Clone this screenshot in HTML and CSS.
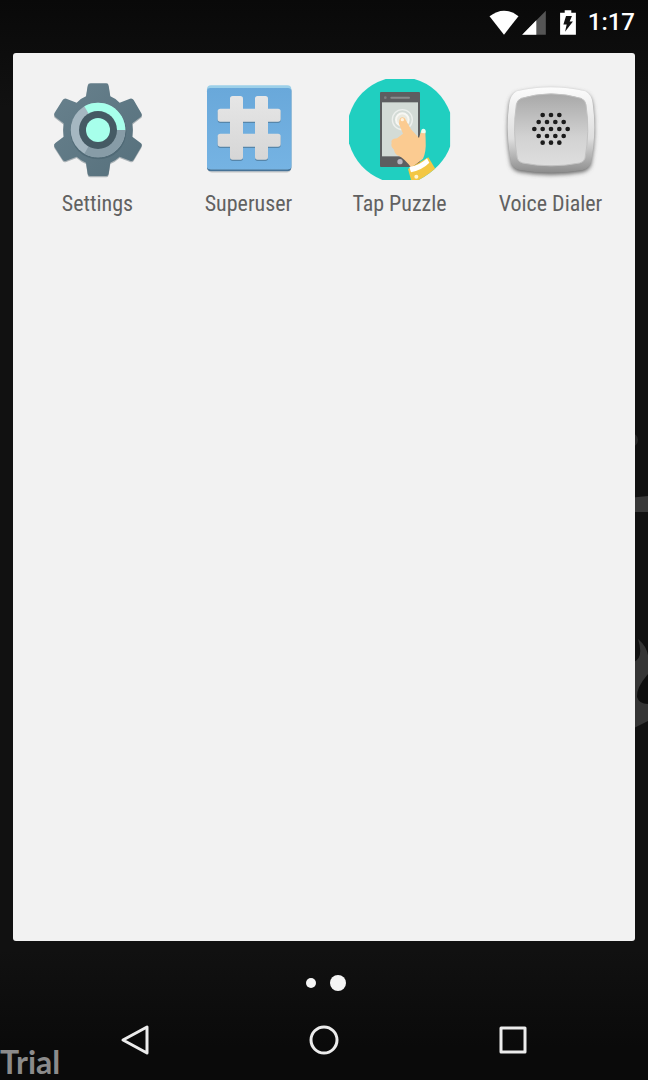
FILE: index.html
```html
<!DOCTYPE html>
<html lang="en">
<head>
  <meta charset="UTF-8" />
  <meta name="viewport" content="width=device-width, initial-scale=1.0"/>
  <title>Apps</title>
  <link rel="stylesheet" href="styles.css">
</head>
<body>
  <!-- wallpaper shapes peeking out at the right edge -->
  <svg class="wallpaper" viewBox="0 0 40 320" aria-hidden="true">
    <circle cx="23" cy="20" r="7" fill="#292929"/>
    <path d="M20 78 L40 76 V92 H20Z" fill="#383838"/>
    <path d="M30 219 Q42 229 40 243 V301 L26 308 V242 Q36 237 30 219Z" fill="#353535"/>
    <path d="M40 254 Q28 268 29 277 Q31 284 40 284Z" fill="#0e0e0e"/>
  </svg>

  <header class="status-bar">
    <svg class="wifi" viewBox="36 26 88 76" role="img" aria-label="Wi-Fi">
      <path d="M36 45 Q80 11 124 45 L80 101Z" fill="#fff"/>
    </svg>
    <svg class="signal" viewBox="133 26 72 76" role="img" aria-label="Signal">
      <path d="M205 28 V101 H133Z" fill="#555"/>
      <path d="M176 57 V101 H133Z" fill="#fff"/>
    </svg>
    <svg class="battery" viewBox="247 26 48 76" role="img" aria-label="Battery charging">
      <path d="M261 27 H281 V34 H295 V101 H247 V34 H261Z" fill="#fff"/>
      <path d="M265 44 H283 L276 61 H286 L262 92 L267 70 H257Z" fill="#111"/>
    </svg>
    <time class="clock">1:17</time>
  </header>

  <main class="drawer">
    <button class="app">
      <svg class="app-icon" viewBox="18 24 312 312" aria-hidden="true">
        <defs>
          <linearGradient id="gearFill" x1="0" y1="0" x2="1" y2="1">
            <stop offset="0" stop-color="#68818d"/>
            <stop offset="1" stop-color="#56707c"/>
          </linearGradient>
          <path id="gear" d="M152 40 H199 Q205 40 206 47 L211 79 Q226 85 239 98 L270 86 Q277 84 281 90 L304 130 Q308 137 302 141 L277 160 Q280 180 277 200 L302 219 Q308 223 304 230 L281 269 Q277 275 270 272 L239 260 Q226 272 211 278 L206 311 Q205 318 199 318 H150 Q144 318 143 311 L138 278 Q123 272 110 260 L79 272 Q72 275 68 269 L43 230 Q40 223 46 219 L71 200 Q68 180 71 160 L46 141 Q40 137 43 130 L68 90 Q72 84 79 86 L110 98 Q123 85 138 79 L143 47 Q144 40 152 40Z"/>
        </defs>
        <use href="#gear" y="4" fill="#aab2b6"/>
        <use href="#gear" fill="url(#gearFill)"/>
        <circle cx="175" cy="184" r="84" fill="#506a76"/>
        <circle cx="174" cy="180" r="82" fill="#a5b7c1"/>
        <path d="M174 180 L133 109 A82 82 0 0 1 256 180Z" fill="#a7ffeb"/>
        <path d="M174 180 H256 A82 82 0 0 1 133 251Z" fill="#879ca7"/>
        <circle cx="174" cy="180" r="57" fill="#455a64"/>
        <circle cx="174" cy="180" r="36" fill="#a7ffeb"/>
      </svg>
      <span class="app-name">Settings</span>
    </button>

    <button class="app">
      <svg class="app-icon" viewBox="21 24 312 312" aria-hidden="true">
        <defs>
          <linearGradient id="tile" x1="0" y1="0" x2="0" y2="1">
            <stop offset="0" stop-color="#69a8da"/>
            <stop offset="1" stop-color="#75b3e3"/>
          </linearGradient>
          <linearGradient id="hashFill" x1="0" y1="0" x2="0" y2="1">
            <stop offset="0" stop-color="#e6e6e6"/>
            <stop offset="1" stop-color="#d6d6d6"/>
          </linearGradient>
          <path id="hash" fill-rule="evenodd" d="M128 78 H151 Q159 78 159 86 V116 H195 V86 Q195 78 203 78 H226 Q234 78 234 86 V116 H264 Q272 116 272 124 V147 Q272 155 264 155 H234 V191 H264 Q272 191 272 199 V222 Q272 230 264 230 H234 V261 Q234 269 226 269 H203 Q195 269 195 261 V230 H159 V261 Q159 269 151 269 H128 Q120 269 120 261 V230 H91 Q83 230 83 222 V199 Q83 191 91 191 H120 V155 H91 Q83 155 83 147 V124 Q83 116 91 116 H120 V86 Q120 78 128 78Z M159 155 V191 H195 V155Z"/>
        </defs>
        <rect x="52" y="52" width="252" height="256" rx="14" fill="#d4d4d4"/>
        <rect x="51" y="50" width="253" height="254" rx="12" fill="#477397"/>
        <rect x="51" y="46" width="253" height="252" rx="12" fill="#9cd0e9"/>
        <rect x="51" y="54" width="253" height="244" rx="10" fill="url(#tile)"/>
        <use href="#hash" y="4" fill="#5686aa"/>
        <use href="#hash" fill="url(#hashFill)"/>
      </svg>
      <span class="app-name">Superuser</span>
    </button>

    <button class="app">
      <svg class="app-icon" viewBox="24 24 312 312" aria-hidden="true">
        <defs>
          <clipPath id="round">
            <path d="M137 27 H223 Q300 49 331 129 V228 Q310 290 236 330 H127 Q52 300 27 220 V137 Q53 54 137 27Z"/>
          </clipPath>
        </defs>
        <g clip-path="url(#round)">
          <rect x="20" y="20" width="320" height="320" fill="#20cfc0"/>
          <rect x="120" y="66" width="120" height="225" rx="3" fill="#5d5e60"/>
          <rect x="126" y="97" width="108" height="162" fill="#d3dbd6"/>
          <rect x="151" y="80" width="59" height="6" rx="3" fill="#898b8c"/>
          <circle cx="136" cy="83" r="4" fill="#7d7f80"/>
          <circle cx="180" cy="275" r="8" fill="#b9b6c0"/>
          <circle cx="187" cy="149" r="30" fill="none" stroke="#edf0ed" stroke-width="4"/>
          <circle cx="187" cy="149" r="19" fill="#e9e9df" stroke="#f7f7f3" stroke-width="6"/>
          <path d="M178 151 Q181 138 194 144 L213 178 L237 204 L243 184 Q248 173 256 183 L257 211 Q259 246 249 266 L214 293 Q193 265 176 257 Q164 253 162 239 Q151 230 155 219 Q150 207 171 205 L189 191 L177 162Z" fill="#fbcb91"/>
          <circle cx="187" cy="149" r="5" fill="#fff1dc"/>
          <path d="M244 189 Q242 176 251 176 Q260 178 256 190Z" fill="#e9fff3"/>
          <path d="M204 297 L265 262 L288 300 L235 340 H216Z" fill="#f3c744"/>
          <path d="M208 291 Q242 285 261 265 L268 278 Q249 298 213 307Z" fill="#fff"/>
          <circle cx="229" cy="320" r="6" fill="#fff5cf"/>
        </g>
      </svg>
      <span class="app-name">Tap Puzzle</span>
    </button>

    <button class="app">
      <svg class="app-icon" viewBox="27 24 312 312" aria-hidden="true">
        <defs>
          <linearGradient id="rim" x1="0" y1="0" x2="0" y2="1">
            <stop offset="0" stop-color="#fcfcfc"/>
            <stop offset="0.6" stop-color="#dedede"/>
            <stop offset="1" stop-color="#8c8c8c"/>
          </linearGradient>
          <linearGradient id="face" x1="0" y1="0" x2="0" y2="1">
            <stop offset="0" stop-color="#a8a8a8"/>
            <stop offset="0.6" stop-color="#d2d2d2"/>
            <stop offset="1" stop-color="#dedede"/>
          </linearGradient>
          <filter id="shade" x="-20%" y="-20%" width="140%" height="140%">
            <feGaussianBlur stdDeviation="7"/>
          </filter>
          <path id="shell" d="M80 64 Q183 39 286 64 Q305 74 308 99 Q320 184 303 278 Q297 295 278 300 Q183 317 89 300 Q68 295 63 278 Q46 184 58 99 Q62 74 80 64Z"/>
        </defs>
        <use href="#shell" y="6" fill="#666" filter="url(#shade)"/>
        <use href="#shell" fill="url(#rim)"/>
        <path d="M94 85 Q183 58 273 85 Q286 90 288 104 Q300 184 285 265 Q282 276 269 279 Q183 296 98 279 Q85 276 82 265 Q67 184 79 104 Q81 90 94 85Z" fill="url(#face)" stroke="#c2c2c2" stroke-width="3"/>
        <g fill="#1b1b1b">
          <circle cx="158" cy="135" r="7"/><circle cx="183" cy="135" r="7"/><circle cx="208" cy="135" r="7"/>
          <circle cx="146" cy="156" r="7"/><circle cx="171" cy="156" r="7"/><circle cx="196" cy="156" r="7"/><circle cx="221" cy="156" r="7"/>
          <circle cx="133" cy="177" r="7"/><circle cx="158" cy="177" r="7"/><circle cx="183" cy="177" r="7"/><circle cx="208" cy="177" r="7"/><circle cx="233" cy="177" r="7"/>
          <circle cx="146" cy="198" r="7"/><circle cx="171" cy="198" r="7"/><circle cx="196" cy="198" r="7"/><circle cx="221" cy="198" r="7"/>
          <circle cx="158" cy="218" r="7"/><circle cx="183" cy="218" r="7"/><circle cx="208" cy="218" r="7"/>
        </g>
      </svg>
      <span class="app-name">Voice Dialer</span>
    </button>
  </main>

  <div class="pages">
    <button class="page" aria-label="Page 1"></button>
    <button class="page current" aria-label="Page 2"></button>
  </div>

  <nav class="nav-bar">
    <button class="nav-btn" aria-label="Back">
      <svg viewBox="0 0 32 32"><path d="M28 3 V29 L4 16Z"/></svg>
    </button>
    <button class="nav-btn" aria-label="Home">
      <svg viewBox="0 0 32 32"><circle cx="16" cy="16" r="13"/></svg>
    </button>
    <button class="nav-btn" aria-label="Recent apps">
      <svg viewBox="0 0 32 32"><rect x="4" y="4" width="24" height="24"/></svg>
    </button>
  </nav>

  <div class="watermark">Trial</div>
</body>
</html>
```

FILE: styles.css
```css
* {
  box-sizing: border-box;
}
body {
  font-family: "Roboto Condensed", Roboto, sans-serif;
  margin: 0;
  min-height: 100vh;
  position: relative;
  display: flex;
  flex-direction: column;
  background: linear-gradient(#090909, #111 10%, #111 88%, #0a0a0a 97%);
}
button {
  background: none;
  border: none;
  padding: 0;
  font: inherit;
  cursor: pointer;
}
svg {
  display: block;
}
.wallpaper {
  position: absolute;
  top: 420px;
  right: 0;
  width: 40px;
  height: 320px;
}
.status-bar {
  display: flex;
  align-items: center;
  justify-content: flex-end;
  height: 44px;
  padding-right: 13px;
  color: #fff;
}
.wifi {
  width: 30px;
  height: 25px;
}
.signal {
  width: 24px;
  height: 25px;
  margin-left: 3px;
}
.battery {
  width: 16px;
  height: 25px;
  margin-left: 14px;
}
.clock {
  margin-left: 12px;
  font-family: Roboto, sans-serif;
  font-size: 24px;
  font-weight: 500;
  line-height: 32px;
}
.drawer {
  position: relative;
  flex: 1;
  display: grid;
  grid-template-columns: repeat(4, 1fr);
  align-content: start;
  margin: 9px 13px 0;
  padding: 25px 9px;
  background: #f2f2f2;
  border-radius: 3px;
}
.app {
  display: flex;
  flex-direction: column;
  align-items: center;
  gap: 9px;
}
.app-icon {
  width: 104px;
  height: 104px;
}
.app-name {
  color: #616161;
  font-size: 22px;
  line-height: 26px;
  white-space: nowrap;
}
.pages {
  display: flex;
  align-items: center;
  justify-content: center;
  gap: 14px;
  height: 83px;
  padding-left: 3px;
}
.page {
  width: 10px;
  height: 10px;
  border-radius: 50%;
  background: #f5f5f5;
}
.page.current {
  width: 16px;
  height: 16px;
}
.nav-bar {
  display: flex;
  justify-content: center;
  gap: 93px;
  height: 56px;
  padding-bottom: 24px;
}
.nav-btn {
  width: 96px;
  height: 32px;
  display: flex;
  justify-content: center;
}
.nav-btn svg {
  width: 32px;
  height: 32px;
  fill: none;
  stroke: #ececec;
  stroke-width: 3;
  stroke-linejoin: round;
}
.watermark {
  position: absolute;
  left: 0;
  bottom: 0;
  color: #8b8b8b;
  font-family: Lato, sans-serif;
  font-size: 32px;
  font-weight: 700;
  line-height: 36px;
}
```
